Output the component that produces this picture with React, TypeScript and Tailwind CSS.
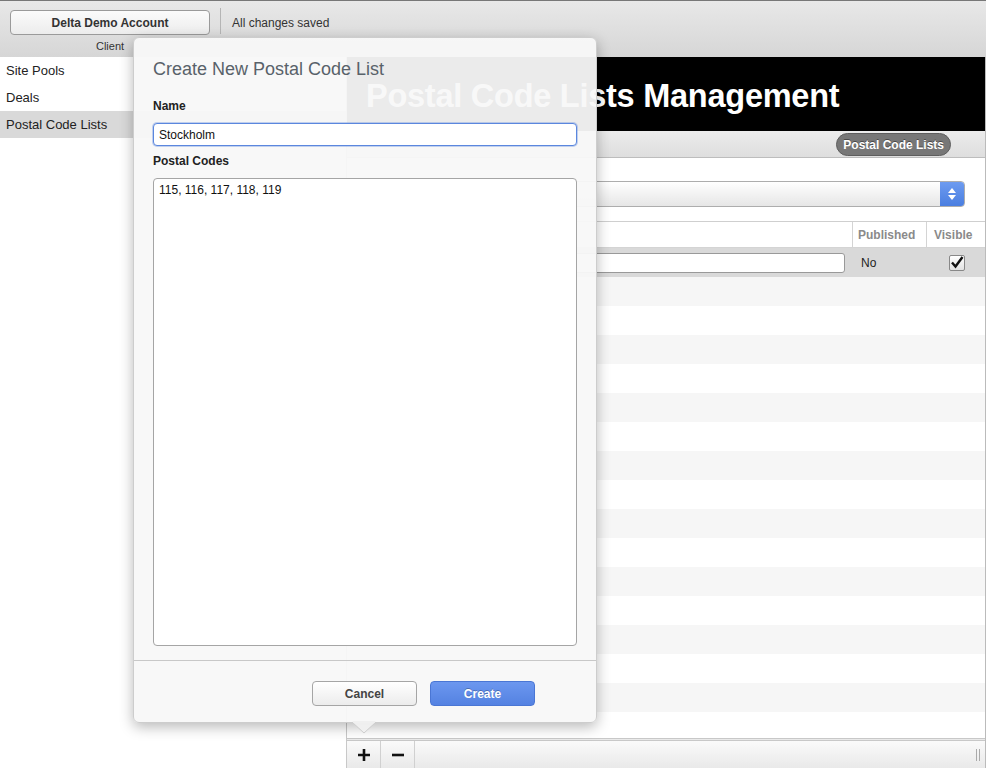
import React from "react";

const rows = Array.from({ length: 17 }, (_, i) => i);

export default function App() {
  return (
    <div className="relative w-[986px] h-[768px] overflow-hidden bg-white font-['Liberation_Sans',Arial,sans-serif] text-[#222]">
      {/* Top bar */}
      <div className="h-[57px] border-t border-[#777] bg-gradient-to-b from-[#e8e8e8] to-[#d6d6d6] flex">
        <div className="w-[220px] flex flex-col items-center pt-[9px]">
          <div className="w-[200px] h-[25px] rounded-[4px] border border-[#9a9a9a] bg-gradient-to-b from-[#fbfbfb] to-[#ececec] flex items-center justify-center text-[12px] font-bold text-[#333]">
            Delta Demo Account
          </div>
          <div className="mt-[3px] text-[11px] text-[#333]">Client</div>
        </div>
        <div className="w-px h-[26px] mt-[7px] bg-[#b5b5b5]" />
        <div className="pl-[11px] pt-[13px] text-[12px] text-[#333]">All changes saved</div>
      </div>

      <div className="flex h-[711px]">
        {/* Sidebar */}
        <div className="w-[347px] border-r border-[#c8c8c8] bg-white text-[13px]">
          <div className="h-[27px] flex items-center pl-[6px]">Site Pools</div>
          <div className="h-[27px] flex items-center pl-[6px]">Deals</div>
          <div className="h-[27px] flex items-center pl-[6px] bg-[#d9d9d9]">Postal Code Lists</div>
        </div>

        {/* Main */}
        <div className="flex-1 flex flex-col border-r border-[#bbb] min-w-0">
          <div className="h-[74px] bg-black flex items-center pl-[19px] pt-[5px]">
            <span className="text-white font-bold text-[32.5px] tracking-[-0.25px]">Postal Code Lists Management</span>
          </div>
          <div className="h-[27px] bg-gradient-to-b from-[#ececec] to-[#dedede] border-b border-[#bdbdbd] flex items-center justify-end pr-[34px]">
            <div className="h-[23px] mt-[1px] px-[6px] rounded-full bg-[#777] border border-[#5e5e5e] flex items-center text-white text-[12px] font-bold [text-shadow:0_-1px_0_rgba(0,0,0,0.4)]">
              Postal Code Lists
            </div>
          </div>
          <div className="h-[63px] flex items-start pt-[23px] pl-[20px] pr-[20px]">
            <div className="flex-1 h-[26px] rounded-[4px] border border-[#adadad] bg-gradient-to-b from-[#ffffff] to-[#e6e6e6] flex justify-end overflow-hidden">
              <div className="w-[24px] h-full bg-gradient-to-b from-[#6d9bf0] to-[#4a7ee0] flex flex-col items-center justify-center gap-[2px]">
                <svg width="8" height="5" viewBox="0 0 8 5"><path d="M0 5 L4 0 L8 5 Z" fill="white" /></svg>
                <svg width="8" height="5" viewBox="0 0 8 5"><path d="M0 0 L4 5 L8 0 Z" fill="white" /></svg>
              </div>
            </div>
          </div>
          {/* Table */}
          <div className="flex-1 flex flex-col border-t border-[#cfcfcf] min-h-0 overflow-hidden">
            <div className="h-[26px] flex border-b border-[#d4d4d4] text-[12px] font-bold text-[#8a8a8a]">
              <div className="flex-1 border-r border-[#d4d4d4]" />
              <div className="w-[74px] border-r border-[#d4d4d4] flex items-center pl-[5px]">Published</div>
              <div className="w-[58px] flex items-center pl-[7px]">Visible</div>
            </div>
            <div className="h-[29px] flex bg-[#d9d9d9] items-center text-[12px]">
              <div className="flex-1 pl-[20px] pr-[8px]">
                <div className="h-[20px] rounded-[3px] border border-[#999] bg-white" />
              </div>
              <div className="w-[74px] pl-[8px] text-[#222]">No</div>
              <div className="w-[58px] flex justify-center pl-[2px]">
                <div className="w-[16px] h-[16px] rounded-[2px] border border-[#888] bg-gradient-to-b from-white to-[#e2e2e2] flex items-center justify-center">
                  <svg width="14" height="13" viewBox="0 0 14 13"><path d="M2 6.5 L5.5 10.5 L12.5 1" stroke="#111" strokeWidth="2.4" fill="none" /></svg>
                </div>
              </div>
            </div>
            <div className="flex-1 flex flex-col overflow-hidden">
              {rows.map((i) => (
                <div key={i} className={`h-[29px] shrink-0 ${i % 2 === 0 ? "bg-[#f6f6f6]" : "bg-white"}`} />
              ))}
            </div>
          </div>
          {/* Bottom toolbar */}
          <div className="h-[30px] border-t-[3px] border-double border-[#c8c8c8] bg-gradient-to-b from-[#fafafa] to-[#e9e9e9] flex items-center">
            <div className="w-[34px] h-full flex items-center justify-center border-r border-[#d0d0d0]">
              <svg width="12" height="12" viewBox="0 0 12 12"><path d="M6 0 V12 M0 6 H12" stroke="#111" strokeWidth="2.6" /></svg>
            </div>
            <div className="w-[34px] h-full flex items-center justify-center border-r border-[#d0d0d0]">
              <svg width="12" height="12" viewBox="0 0 12 12"><path d="M0 6 H12" stroke="#111" strokeWidth="2.6" /></svg>
            </div>
            <div className="flex-1" />
            <div className="flex gap-[2px] mr-[5px]">
              <div className="w-px h-[12px] bg-[#aaa]" />
              <div className="w-px h-[12px] bg-[#aaa]" />
            </div>
          </div>
        </div>
      </div>

      {/* Popover */}
      <div className="absolute left-[133px] top-[37px] w-[464px] h-[686px] rounded-[6px] bg-[rgba(248,248,248,0.95)] border border-[#cdcdcd] shadow-[0_4px_14px_rgba(0,0,0,0.28)] flex flex-col">
        <div className="px-[19px] pt-[20px] flex-1 flex flex-col">
          <div className="text-[18px] text-[#59626a] leading-[22px]">Create New Postal Code List</div>
          <div className="mt-[17px] text-[12px] font-bold text-[#222]">Name</div>
          <div className="mt-[8px] h-[23px] rounded-[4px] border border-[#5b87de] shadow-[0_0_0_1px_rgba(91,135,222,0.35)] bg-white flex items-center pl-[5px] text-[12px] text-[#111]">
            Stockholm
          </div>
          <div className="mt-[6px] text-[12px] font-bold text-[#222]">Postal Codes</div>
          <div className="mt-[8px] h-[468px] rounded-[4px] border border-[#a5a5a5] bg-white px-[5px] pt-[2px] text-[12px] text-[#111]">
            115, 116, 117, 118, 119
          </div>
        </div>
        <div className="h-[62px] border-t border-[#c8c8c8] flex items-start pt-[20px] pl-[178px] gap-[13px]">
          <div className="w-[105px] h-[25px] rounded-[4px] border border-[#a5a5a5] bg-gradient-to-b from-white to-[#ececec] flex items-center justify-center text-[12px] font-bold text-[#444]">
            Cancel
          </div>
          <div className="w-[105px] h-[25px] rounded-[4px] border border-[#4a76d4] bg-gradient-to-b from-[#6c97ef] to-[#5482e2] flex items-center justify-center text-[12px] font-bold text-white [text-shadow:0_-1px_0_rgba(0,0,0,0.25)]">
            Create
          </div>
        </div>
      </div>
      {/* Popover arrow */}
      <svg className="absolute left-[352px] top-[721px]" width="24" height="13" viewBox="0 0 24 13">
        <path d="M0 1 L12 12 L24 1" fill="rgba(240,240,240,0.98)" stroke="#cdcdcd" strokeWidth="1" />
        <path d="M1 0 H23 V1.5 H1 Z" fill="rgb(240,240,240)" />
      </svg>
    </div>
  );
}
